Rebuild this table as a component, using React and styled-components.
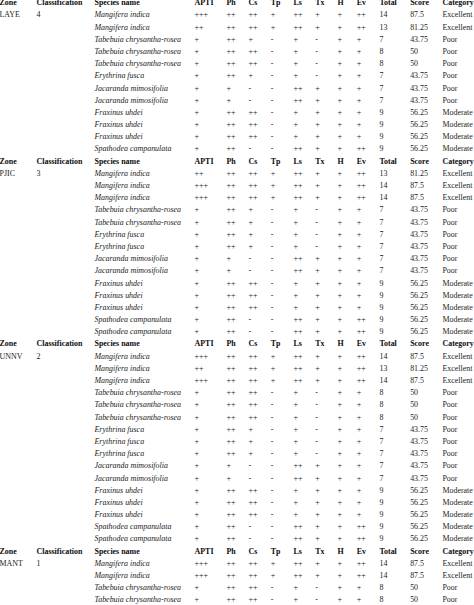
import React from 'react';
import styled, { createGlobalStyle } from 'styled-components';

const GlobalStyle = createGlobalStyle`
  html, body {
    margin: 0;
    padding: 0;
    background: #fff;
    overflow: hidden;
  }
`;

const COLS = '37px 58px 100px 32px 22px 22.3px 22.7px 21.7px 22.3px 19.3px 22.7px 30.7px 32.3px 70px';

const Sheet = styled.div`
  margin: -2.8px 0 0 -0.5px;
  width: 520px;
  font-family: 'Liberation Serif', 'Times New Roman', serif;
  font-size: 7.95px;
  color: #222;
`;

const Row = styled.div`
  display: grid;
  grid-template-columns: ${COLS};
  height: 12.2px;
  line-height: 12.2px;
  white-space: nowrap;
  font-weight: ${(p) => (p.$head ? 700 : 400)};
  color: ${(p) => (p.$head ? '#0d0d0d' : '#222')};
`;

const Cell = styled.span`
  overflow: visible;
  font-style: ${(p) => (p.$italic ? 'italic' : 'normal')};
`;

const HEAD = ['Zone', 'Classification', 'Species name', 'APTI', 'Ph', 'Cs', 'Tp', 'Ls', 'Tx', 'H', 'Ev', 'Total', 'Score', 'Category'];

const SP = {
  M: 'Mangifera indica',
  T: 'Tabebuia chrysantha-rosea',
  E: 'Erythrina fusca',
  J: 'Jacaranda mimosifolia',
  F: 'Fraxinus uhdei',
  S: 'Spathodea campanulata',
};

// APTI Ph Cs Tp Ls Tx H Ev Total Score Category
const V = {
  m14: ['+++', '++', '++', '+', '++', '+', '+', '++', '14', '87.5', 'Excellent'],
  m13: ['++', '++', '++', '+', '++', '+', '+', '++', '13', '81.25', 'Excellent'],
  t7: ['+', '++', '+', '-', '+', '-', '+', '+', '7', '43.75', 'Poor'],
  t8: ['+', '++', '++', '-', '+', '-', '+', '+', '8', '50', 'Poor'],
  j7: ['+', '+', '-', '-', '++', '+', '+', '+', '7', '43.75', 'Poor'],
  f9: ['+', '++', '++', '-', '+', '+', '+', '+', '9', '56.25', 'Moderate'],
  s9: ['+', '++', '-', '-', '++', '+', '+', '++', '9', '56.25', 'Moderate'],
};

const sections = [
  {
    zone: 'LAYE', cls: '4',
    rows: [['M', 'm14'], ['M', 'm13'], ['T', 't7'], ['T', 't8'], ['T', 't8'], ['E', 't7'], ['J', 'j7'], ['J', 'j7'], ['F', 'f9'], ['F', 'f9'], ['F', 'f9'], ['S', 's9']],
  },
  {
    zone: 'PJIC', cls: '3',
    rows: [['M', 'm13'], ['M', 'm14'], ['M', 'm14'], ['T', 't7'], ['T', 't7'], ['E', 't7'], ['E', 't7'], ['J', 'j7'], ['J', 'j7'], ['F', 'f9'], ['F', 'f9'], ['F', 'f9'], ['S', 's9'], ['S', 's9']],
  },
  {
    zone: 'UNNV', cls: '2',
    rows: [['M', 'm14'], ['M', 'm13'], ['M', 'm14'], ['T', 't8'], ['T', 't8'], ['T', 't8'], ['E', 't7'], ['E', 't7'], ['E', 't7'], ['J', 'j7'], ['J', 'j7'], ['F', 'f9'], ['F', 'f9'], ['F', 'f9'], ['S', 's9'], ['S', 's9']],
  },
  {
    zone: 'MANT', cls: '1',
    rows: [['M', 'm14'], ['M', 'm14'], ['T', 't8'], ['T', 't8']],
  },
];

export default function App() {
  return (
    <>
      <GlobalStyle />
      <Sheet>
        {sections.map((sec) => (
          <React.Fragment key={sec.zone}>
            <Row $head>
              {HEAD.map((h) => (
                <Cell key={h}>{h}</Cell>
              ))}
            </Row>
            {sec.rows.map(([sp, v], i) => (
              <Row key={i}>
                <Cell>{i === 0 ? sec.zone : ''}</Cell>
                <Cell>{i === 0 ? sec.cls : ''}</Cell>
                <Cell $italic>{SP[sp]}</Cell>
                {V[v].map((val, j) => (
                  <Cell key={j}>{val}</Cell>
                ))}
              </Row>
            ))}
          </React.Fragment>
        ))}
      </Sheet>
    </>
  );
}
